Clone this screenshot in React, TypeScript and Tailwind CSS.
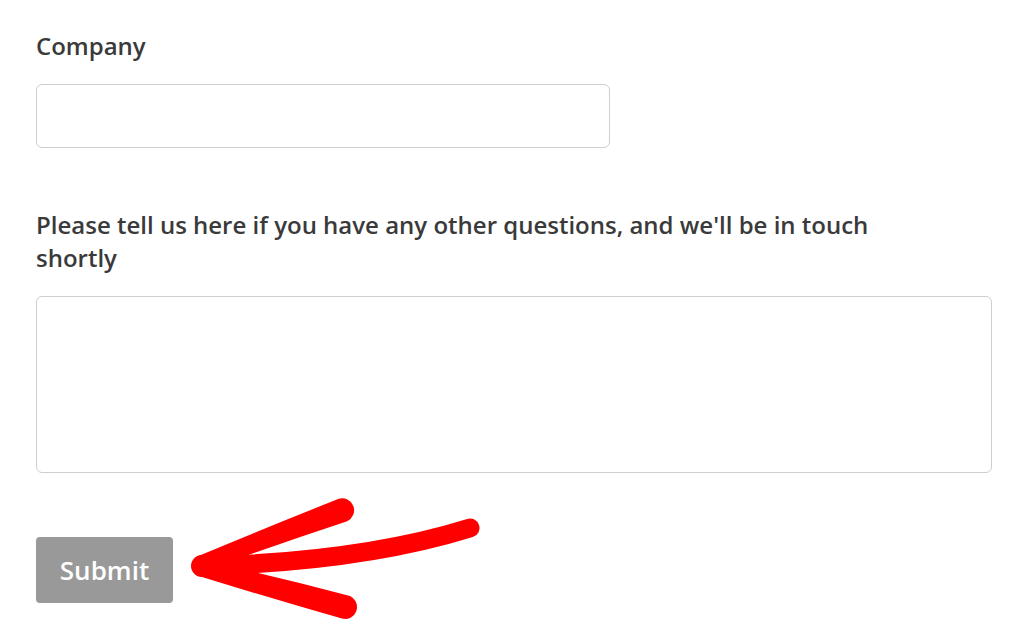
import { useState } from "react";

const font = { fontFamily: "'Open Sans', 'Noto Sans', Arial, sans-serif" };

function Arrow() {
  return (
    <svg
      className="pointer-events-none absolute left-[180px] top-[490px]"
      width="320"
      height="140"
      viewBox="0 0 320 140"
      fill="none"
    >
      <g fill="#ff0000">
        <path d="M17.2 66.5 Q 90 36 158.8 8.8 A 12 12 0 0 1 167.2 31.2 Q 95 55 22.8 81.5 Z" />
        <path d="M22.1 70.3 Q 95 86 168.1 105.4 A 12 12 0 0 1 161.9 128.6 Q 90 108 17.9 85.7 Z" />
        <circle cx="22" cy="76" r="11" />
      </g>
      <path
        d="M22 76 C 100 74, 200 66, 290 38"
        stroke="#ff0000"
        strokeWidth="19"
        strokeLinecap="round"
      />
    </svg>
  );
}

export default function App() {
  const [company, setCompany] = useState("");
  const [message, setMessage] = useState("");

  return (
    <div className="relative h-[638px] w-[1024px] overflow-hidden bg-white" style={font}>
      <form
        className="flex flex-col px-[36px] pt-[29px]"
        onSubmit={(event) => event.preventDefault()}
      >
        <label className="text-[24px] font-semibold leading-[33px] text-[#3a3a3a]">
          Company
        </label>
        <input
          value={company}
          onChange={(event) => setCompany(event.target.value)}
          className="mt-[22px] h-[64px] w-[574px] rounded-[6px] border border-[#cfcfcf] bg-white px-3 outline-none"
        />

        <label className="mt-[60px] max-w-[900px] text-[24px] font-semibold leading-[33px] text-[#3a3a3a]">
          Please tell us here if you have any other questions, and we'll be in touch shortly
        </label>
        <textarea
          value={message}
          onChange={(event) => setMessage(event.target.value)}
          className="mt-[22px] h-[177px] w-[956px] resize-none rounded-[6px] border border-[#cfcfcf] bg-white p-3 outline-none"
        />

        <div className="mt-[64px]">
          <button
            type="submit"
            className="h-[66px] w-[137px] rounded-[4px] bg-[#999999] text-[26px] font-semibold text-white"
          >
            Submit
          </button>
        </div>
      </form>
      <Arrow />
    </div>
  );
}
